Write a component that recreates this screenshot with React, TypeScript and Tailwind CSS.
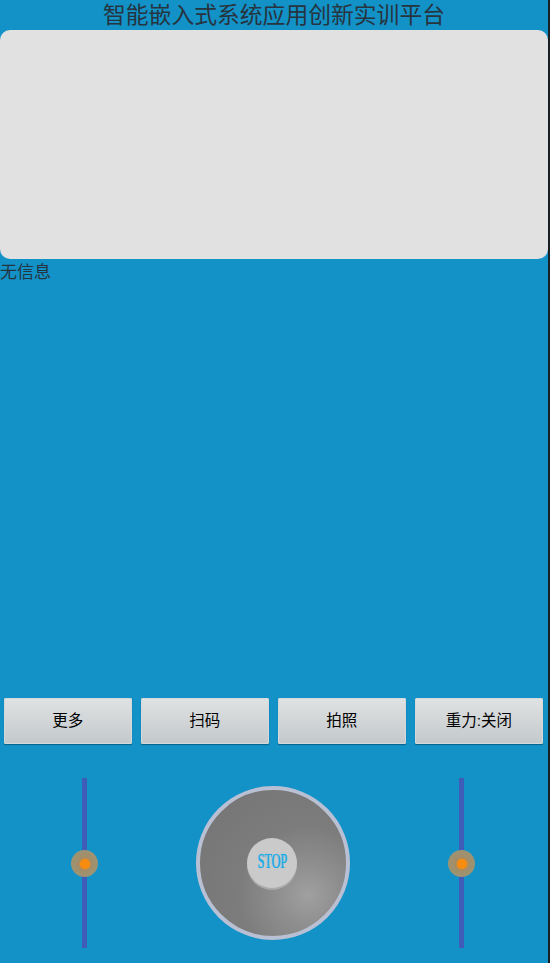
const buttons = ['更多', '扫码', '拍照', '重力:关闭']

const cjk = "font-['Liberation_Sans','Noto_Sans_CJK_SC',sans-serif]"

function Slider() {
  return (
    <div className="relative flex h-[170px] w-[27px] justify-center">
      <div className="h-full w-[5px] bg-[#3f5cb8]" />
      {/* thumb */}
      <div className="absolute left-0 top-[72px] flex h-[27px] w-[27px] items-center justify-center rounded-full bg-[radial-gradient(circle,#a8875f_0%,#9f9270_60%,#8f9a7e_100%)]">
        <div className="h-[10px] w-[10px] rounded-full bg-[#f78c10] shadow-[0_0_2px_#f78c10]" />
      </div>
    </div>
  )
}

function Joystick() {
  return (
    <div className="mt-[8px] flex h-[154px] w-[154px] items-center justify-center rounded-full border-[4px] border-[#b9c0d3] bg-[radial-gradient(circle_at_74%_72%,#a0a0a0_0%,#8f8f8f_20%,#7c7c7c_46%,#747474_100%)]">
      <div className="relative mr-[2px] flex h-[50px] w-[50px] items-center justify-center rounded-full bg-[#cacaca] shadow-[0_2px_0_#aaaaaa]">
        <span className="-mt-[2px] inline-block scale-x-[0.58] font-['Liberation_Serif',serif] text-[21px] text-[#1fabe6] [text-shadow:0_0_1px_#1fabe6]">STOP</span>
      </div>
    </div>
  )
}

export default function App() {
  return (
    <div className={`flex h-[963px] w-[550px] overflow-hidden bg-[#1a1f24] ${cjk}`}>
      <div className="flex w-[548px] flex-col bg-[#1292c7]">
        <div className="h-[30px] text-center text-[22.8px] leading-[31px] text-[#26343f]">智能嵌入式系统应用创新实训平台</div>
        <div className="h-[229px] rounded-[10px] bg-[#e1e1e1]" />
        <div className="mt-[3px] text-[17px] leading-[22px] text-[#26343f]">无信息</div>

        <div className="mt-auto flex gap-[8.7px] pl-[3.5px]">
          {buttons.map((label) => (
            <button
              key={label}
              className="h-[46px] w-[128.4px] rounded-[1px] border border-[#d5d9db] bg-gradient-to-b from-[#dfe2e3] to-[#c4c9cb] text-[15.5px] text-black shadow-[0_1px_1px_rgba(0,50,80,0.5)]"
            >
              {label}
            </button>
          ))}
        </div>

        <div className="mb-[15px] mt-[34px] flex items-start gap-[98px] pl-[71px]">
          <Slider />
          <Joystick />
          <Slider />
        </div>
      </div>
    </div>
  )
}
